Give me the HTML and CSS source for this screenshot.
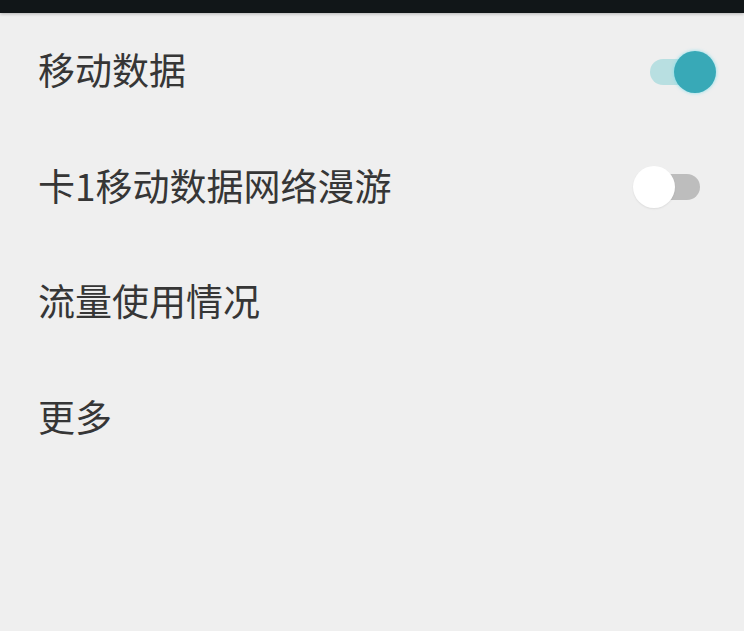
FILE: index.html
```html
<!DOCTYPE html>
<html lang="zh-CN">
<head>
<meta charset="utf-8">
<link rel="stylesheet" href="styles.css">
</head>
<body>
<div class="statusbar"></div>
<div class="list">
  <div class="row">
    <span class="label">移动数据</span>
    <span class="switch on"><span class="track"></span><span class="thumb"></span></span>
  </div>
  <div class="row">
    <span class="label">卡1移动数据网络漫游</span>
    <span class="switch off"><span class="track"></span><span class="thumb"></span></span>
  </div>
  <div class="row">
    <span class="label">流量使用情况</span>
  </div>
  <div class="row">
    <span class="label">更多</span>
  </div>
</div>
</body>
</html>
```
FILE: styles.css
```css
html, body {
  margin: 0;
  padding: 0;
  background: #efefef;
  width: 744px;
  height: 631px;
  overflow: hidden;
  font-family: "Noto Sans CJK SC", "Noto Sans", sans-serif;
}
.statusbar {
  height: 13px;
  background: #111618;
  box-shadow: 0 1px 3px rgba(0,0,0,0.25);
  position: relative;
  z-index: 1;
}
.list {
  padding-top: 1px;
}
.row {
  height: 115.5px;
  display: flex;
  align-items: center;
  justify-content: space-between;
  padding: 0 28px 0 38px;
}
.label {
  font-size: 37px;
  color: #363636;
  line-height: 1;
  margin-top: -4px;
}
.switch {
  position: relative;
  width: 83px;
  height: 42px;
  display: block;
}
.switch .track {
  position: absolute;
  left: 17px;
  top: 8px;
  width: 50px;
  height: 26px;
  border-radius: 13px;
}
.switch .thumb {
  position: absolute;
  top: 0;
  width: 42px;
  height: 42px;
  border-radius: 50%;
}
.switch.on .track { background: #b8dfe1; }
.switch.on .thumb {
  right: 0;
  background: #38a9b7;
  box-shadow: 0 0 3px 1px rgba(120, 220, 235, 0.55);
}
.switch.off .track { background: #bdbdbd; }
.switch.off .thumb {
  left: 0;
  background: #ffffff;
  box-shadow: 0 1px 2px rgba(0,0,0,0.08);
}
```
